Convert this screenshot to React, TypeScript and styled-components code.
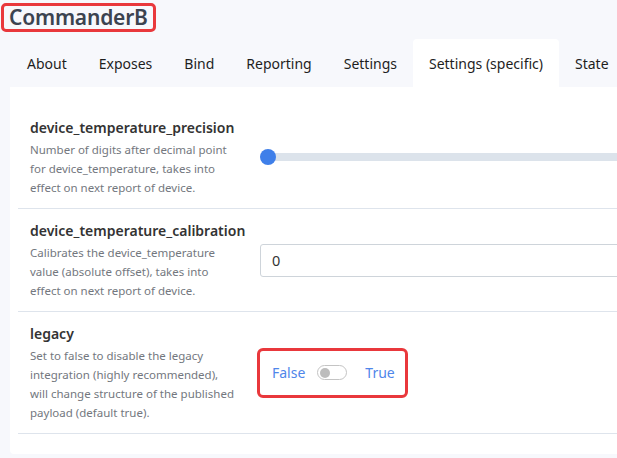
import * as React from 'react';
import styled, { createGlobalStyle } from 'styled-components';

const GlobalStyle = createGlobalStyle`
  html, body {
    margin: 0;
    padding: 0;
    background: #f7f8fc;
    overflow: hidden;
  }
  body {
    font-family: "Noto Sans", "Open Sans", sans-serif;
    color: #222;
  }
`;

const Page = styled.div`
  width: 700px;
  padding-top: 3px;
  display: flex;
  flex-direction: column;
  align-items: stretch;
`;

const TitleBox = styled.h1`
  align-self: flex-start;
  margin: 0 0 0 1px;
  padding: 0 5px;
  height: 23px;
  line-height: 23px;
  border: 3px solid #e9383c;
  border-radius: 5px;
  font-size: 21px;
  font-weight: 600;
  color: #3c4350;
  letter-spacing: -0.2px;
`;

const TabBar = styled.div`
  display: flex;
  margin-top: 7px;
  padding-left: 11px;
`;

const Tab = styled.div<{ $active?: boolean }>`
  height: 48px;
  line-height: 49px;
  padding: 0 16px;
  font-size: 14px;
  color: #1e1e1e;
  background: ${(p) => (p.$active ? '#ffffff' : 'transparent')};
  border-radius: 4px 4px 0 0;
  white-space: nowrap;
`;

const Card = styled.div`
  margin-left: 10px;
  background: #ffffff;
  border-radius: 0 0 4px 4px;
  padding: 19px 0 20px 8px;
`;

const Row = styled.div`
  display: grid;
  grid-template-columns: 230px 1fr;
  align-items: center;
  padding: 11px 0 11px 12px;
  border-bottom: 1px solid #dee4ec;
`;

const Info = styled.div``;

const Label = styled.div`
  font-size: 14px;
  font-weight: 600;
  line-height: 22px;
  margin-bottom: 1px;
  color: #333;
  white-space: nowrap;
`;

const Desc = styled.div`
  max-width: 208px;
  font-size: 11.5px;
  line-height: 19px;
  color: #73777e;
`;

const SliderTrack = styled.div`
  position: relative;
  height: 8px;
  background: #dce3eb;
  margin-left: 2px;
`;

const SliderThumb = styled.div`
  position: absolute;
  left: -2px;
  top: -4px;
  width: 16px;
  height: 16px;
  border-radius: 50%;
  background: #3f7fe9;
`;

const NumberInput = styled.input`
  box-sizing: border-box;
  width: 100%;
  height: 33px;
  border: 1px solid #ced4da;
  border-radius: 3px;
  padding: 0 11px;
  font-family: inherit;
  font-size: 14.5px;
  color: #333;
  outline: none;
`;

const SwitchGroup = styled.div`
  display: inline-flex;
  align-items: center;
  height: 44px;
  padding: 0 10px 0 12px;
  outline: 3px solid #e9383c;
  border-radius: 3px;
  justify-self: start;
`;

const SwitchText = styled.span`
  font-size: 14px;
  color: #4f86ea;
`;

const Switch = styled.span`
  position: relative;
  box-sizing: border-box;
  width: 30px;
  height: 15px;
  margin: 0 18px 0 12px;
  border: 1px solid #c4c4c4;
  border-radius: 8px;
  background: #fff;

  &::after {
    content: '';
    position: absolute;
    left: 2px;
    top: 1.5px;
    width: 10px;
    height: 10px;
    border-radius: 50%;
    background: #bdbdbd;
  }
`;

const tabs = ['About', 'Exposes', 'Bind', 'Reporting', 'Settings', 'Settings (specific)', 'State'];

export default function App() {
  return (
    <>
      <GlobalStyle />
      <Page>
        <TitleBox>CommanderB</TitleBox>
        <TabBar>
          {tabs.map((t) => (
            <Tab key={t} $active={t === 'Settings (specific)'}>
              {t}
            </Tab>
          ))}
        </TabBar>
        <Card>
          <Row>
            <Info>
              <Label>device_temperature_precision</Label>
              <Desc>
                Number of digits after decimal point for device_temperature, takes into effect on next
                report of device.
              </Desc>
            </Info>
            <SliderTrack>
              <SliderThumb />
            </SliderTrack>
          </Row>
          <Row>
            <Info>
              <Label>device_temperature_calibration</Label>
              <Desc>
                Calibrates the device_temperature value (absolute offset), takes into effect on next
                report of device.
              </Desc>
            </Info>
            <NumberInput type="text" defaultValue="0" />
          </Row>
          <Row>
            <Info>
              <Label>legacy</Label>
              <Desc>
                Set to false to disable the legacy integration (highly recommended), will change
                structure of the published payload (default true).
              </Desc>
            </Info>
            <SwitchGroup>
              <SwitchText>False</SwitchText>
              <Switch />
              <SwitchText>True</SwitchText>
            </SwitchGroup>
          </Row>
        </Card>
      </Page>
    </>
  );
}
